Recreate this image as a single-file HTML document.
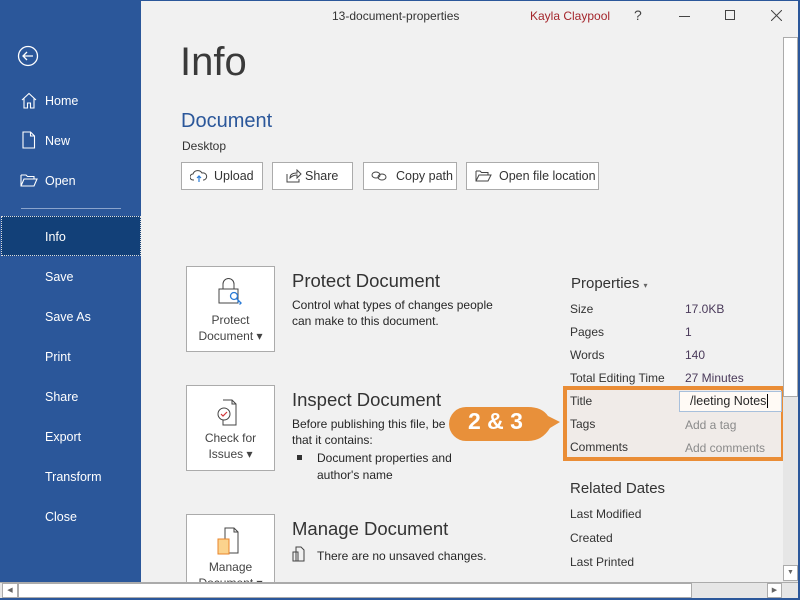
<!DOCTYPE html>
<html><head><meta charset="utf-8"><style>
*{margin:0;padding:0;box-sizing:border-box}
body{width:800px;height:600px;overflow:hidden;background:#f1f1f1;font-family:"Liberation Sans",sans-serif;position:relative;font-size:12px;color:#262626}
.a{position:absolute;white-space:nowrap}
#side{position:absolute;left:0;top:0;width:141px;height:582px;background:#2b579a;color:#fff}
.nav{position:absolute;left:45px;font-size:12.5px;color:#fff}
.btn{position:absolute;top:162px;height:28px;border:1px solid #ababab;background:#fff;font-size:12.5px;color:#333;line-height:26px;padding-left:32px}
.big{position:absolute;left:186px;width:89px;border:1px solid #ababab;background:#fff;text-align:center;font-size:12px;color:#444}
.h2{font-size:18.5px;color:#333}
.lbl{font-size:12px;color:#333}
</style></head><body>
<div id="side">
 <svg class="a" style="left:17px;top:45px" width="22" height="22"><circle cx="11" cy="11" r="9.5" fill="none" stroke="#fff" stroke-width="1.3"/><path d="M6 11h10M10 7l-4 4 4 4" fill="none" stroke="#fff" stroke-width="1.3"/></svg>
 <svg class="a" style="left:20px;top:92px" width="18" height="17"><path d="M2 8L9 1.5 16 8M4 6.5V16h3.5v-5h3v5H14V6.5" fill="none" stroke="#fff" stroke-width="1.1"/></svg>
 <div class="nav" style="top:94px">Home</div>
 <svg class="a" style="left:22px;top:131px" width="14" height="18"><path d="M1 1h7.5l4 4v12H1z M8.5 1v4h4" fill="none" stroke="#fff" stroke-width="1.1"/></svg>
 <div class="nav" style="top:134px">New</div>
 <svg class="a" style="left:20px;top:173px" width="18" height="14"><path d="M1 2h5l1.5 1.5H14V6 M1 2v11h13l3-7H4l-3 7" fill="none" stroke="#fff" stroke-width="1.1"/></svg>
 <div class="nav" style="top:174px">Open</div>
 <div class="a" style="left:21px;top:208px;width:100px;height:1px;background:#8aa4cc"></div>
 <div class="a" style="left:1px;top:216px;width:140px;height:40px;background:#124078;border:1px dotted #ddd"></div>
 <div class="nav" style="top:230px">Info</div>
 <div class="nav" style="top:270px">Save</div>
 <div class="nav" style="top:310px">Save As</div>
 <div class="nav" style="top:350px">Print</div>
 <div class="nav" style="top:390px">Share</div>
 <div class="nav" style="top:430px">Export</div>
 <div class="nav" style="top:470px">Transform</div>
 <div class="nav" style="top:510px">Close</div>
</div>
<div class="a" style="left:141px;top:0;width:659px;height:1px;background:#2b579a"></div>
<div class="a" style="left:332px;top:9px;font-size:12px;color:#333">13-document-properties</div>
<div class="a" style="left:530px;top:9px;font-size:12px;color:#a4262c">Kayla Claypool</div>
<div class="a" style="left:634px;top:7px;font-size:14px;color:#444">?</div>
<div class="a" style="left:679px;top:16px;width:11px;height:1px;background:#444"></div>
<div class="a" style="left:725px;top:10px;width:10px;height:10px;border:1px solid #444"></div>
<svg class="a" style="left:771px;top:10px" width="11" height="11"><path d="M0 0L11 11M11 0L0 11" stroke="#444"/></svg>

<div class="a" style="left:180px;top:40px;font-size:40px;color:#3a3a3a">Info</div>
<div class="a" style="left:181px;top:110px;font-size:20px;color:#2b579a">Document</div>
<div class="a" style="left:182px;top:139px;font-size:12px;color:#333">Desktop</div>
<div class="btn" style="left:181px;width:82px">Upload<svg class="a" style="left:8px;top:6px" width="18" height="14"><path d="M4 11H3a3 3 0 0 1 0-6 5 5 0 0 1 9-1 3.5 3.5 0 0 1 2 7h-1" fill="none" stroke="#444"/><path d="M9 13V7M7 9l2-2 2 2" fill="none" stroke="#2b7bd6" stroke-width="1.2"/></svg></div>
<div class="btn" style="left:272px;width:81px">Share<svg class="a" style="left:13px;top:6px" width="16" height="14"><path d="M1 5v8h12v-3M4 9c0-4 3-5 7-5V1l4 4-4 4V6c-3 0-5 1-7 3z" fill="none" stroke="#444"/></svg></div>
<div class="btn" style="left:363px;width:94px">Copy path<svg class="a" style="left:7px;top:8px" width="16" height="10"><ellipse cx="5" cy="4" rx="4" ry="3" fill="none" stroke="#444"/><ellipse cx="11" cy="6" rx="4" ry="3" fill="none" stroke="#444"/></svg></div>
<div class="btn" style="left:466px;width:133px">Open file location<svg class="a" style="left:8px;top:7px" width="17" height="12"><path d="M1 1h4l1.5 1.5H13V5M1 1v10h12l3-6H4l-3 6" fill="none" stroke="#444"/></svg></div>

<div class="big" style="top:266px;height:86px"><svg class="a" style="left:30px;top:10px" width="28" height="30"><path d="M6 12V7a5.5 5.5 0 0 1 11 0v5M2 12h19v14H2z" fill="none" stroke="#444"/><circle cx="17" cy="19" r="3.5" fill="#fff" stroke="#2b7bd6" stroke-width="1.3"/><path d="M19.5 21.5l5 5M22 24l-1.5 1.5M24 26l-1.5 1.5" stroke="#2b7bd6" stroke-width="1.3"/></svg><div style="position:absolute;top:45px;width:100%;line-height:16px">Protect<br>Document ▾</div></div>
<div class="a h2" style="left:292px;top:270px">Protect Document</div>
<div class="a" style="left:292px;top:297px;line-height:16px">Control what types of changes people<br>can make to this document.</div>

<div class="big" style="top:385px;height:86px"><svg class="a" style="left:29px;top:12px" width="28" height="30"><path d="M7 2h9l4 4v21H7v-6M16 2v4h4" fill="none" stroke="#444"/><circle cx="8" cy="16" r="6" fill="#fff" stroke="#444"/><path d="M5 16l2 2 4-4" fill="none" stroke="#d13438" stroke-width="1.2"/></svg><div style="position:absolute;top:44px;width:100%;line-height:16px">Check for<br>Issues ▾</div></div>
<div class="a h2" style="left:292px;top:389px">Inspect Document</div>
<div class="a" style="left:292px;top:416px;line-height:16px">Before publishing this file, be<br>that it contains:</div>
<div class="a" style="left:297px;top:455px;width:5px;height:5px;background:#333"></div>
<div class="a" style="left:317px;top:450px;line-height:17px">Document properties and<br>author's name</div>

<div class="big" style="top:514px;height:70px;overflow:hidden"><svg class="a" style="left:28px;top:12px" width="30" height="30"><path d="M10 1h9l4 4v21H10zM19 1v4h4" fill="none" stroke="#444"/><rect x="3" y="12" width="11" height="15" fill="#fbd38d" stroke="#e8842b"/></svg><div style="position:absolute;top:44px;width:100%;line-height:16px">Manage<br>Document ▾</div></div>
<div class="a h2" style="left:292px;top:518px">Manage Document</div>
<svg class="a" style="left:292px;top:546px" width="14" height="16"><path d="M4 1h5l3 3v11H4zM1 6h5v9H1z" fill="none" stroke="#444"/></svg>
<div class="a" style="left:317px;top:549px">There are no unsaved changes.</div>

<div class="a" style="left:571px;top:275px;font-size:15px;color:#333">Properties <span style="font-size:8px;color:#666">▾</span></div>
<div class="a lbl" style="left:570px;top:302px">Size</div><div class="a" style="left:685px;top:302px;color:#4a3a5a">17.0KB</div>
<div class="a lbl" style="left:570px;top:325px">Pages</div><div class="a" style="left:685px;top:325px;color:#4a3a5a">1</div>
<div class="a lbl" style="left:570px;top:348px">Words</div><div class="a" style="left:685px;top:348px;color:#4a3a5a">140</div>
<div class="a lbl" style="left:570px;top:371px">Total Editing Time</div><div class="a" style="left:685px;top:371px;color:#4a3a5a">27 Minutes</div>
<div class="a" style="left:563px;top:386px;width:222px;height:75px;border:4px solid #ea8d36;background:#f0ebe8"></div>
<div class="a lbl" style="left:570px;top:394px">Title</div>
<div class="a" style="left:679px;top:391px;width:103px;height:21px;border:1px solid #a8c0dc;background:#fffaf5;padding-left:10px;line-height:19px;font-size:12.5px;overflow:hidden">/leeting Notes<span style="border-left:1px solid #000;margin-left:1px"></span></div>
<div class="a lbl" style="left:570px;top:417px">Tags</div><div class="a" style="left:685px;top:418px;color:#8a8a8a">Add a tag</div>
<div class="a lbl" style="left:570px;top:440px">Comments</div><div class="a" style="left:685px;top:441px;color:#8a8a8a">Add comments</div>
<svg class="a" style="left:448px;top:406px" width="112" height="36"><path d="M18 1H80Q94 1 100 10L112 16 102 22Q94 35 80 35H18A17 17 0 0 1 18 1z" fill="#e8903a"/></svg>
<div class="a" style="left:468px;top:408px;font-size:23px;font-weight:bold;color:#fff">2 &amp; 3</div>

<div class="a" style="left:570px;top:480px;font-size:15px;color:#333">Related Dates</div>
<div class="a lbl" style="left:570px;top:507px">Last Modified</div>
<div class="a lbl" style="left:570px;top:531px">Created</div>
<div class="a lbl" style="left:570px;top:555px">Last Printed</div>

<div class="a" style="left:783px;top:37px;width:15px;height:545px;background:#e6e6e6"></div>
<div class="a" style="left:783px;top:37px;width:15px;height:360px;background:#fff;border:1px solid #ababab"></div>
<div class="a" style="left:783px;top:565px;width:15px;height:16px;background:#fff;border:1px solid #ababab;font-size:7px;text-align:center;line-height:14px;color:#666">▼</div>
<div class="a" style="left:0;top:582px;width:800px;height:18px;background:#e6e6e6;border-top:1px solid #ababab"></div>
<div class="a" style="left:2px;top:583px;width:16px;height:15px;background:#fff;border:1px solid #ababab;font-size:7px;text-align:center;line-height:13px;color:#666">◀</div>
<div class="a" style="left:18px;top:583px;width:674px;height:15px;background:#fff;border:1px solid #ababab"></div>
<div class="a" style="left:767px;top:583px;width:15px;height:15px;background:#fff;border:1px solid #ababab;font-size:7px;text-align:center;line-height:13px;color:#666">▶</div>
<div class="a" style="left:0;top:598px;width:800px;height:2px;background:#2b579a"></div>
<div class="a" style="left:798px;top:0;width:2px;height:600px;background:#2b579a"></div>
</body></html>
